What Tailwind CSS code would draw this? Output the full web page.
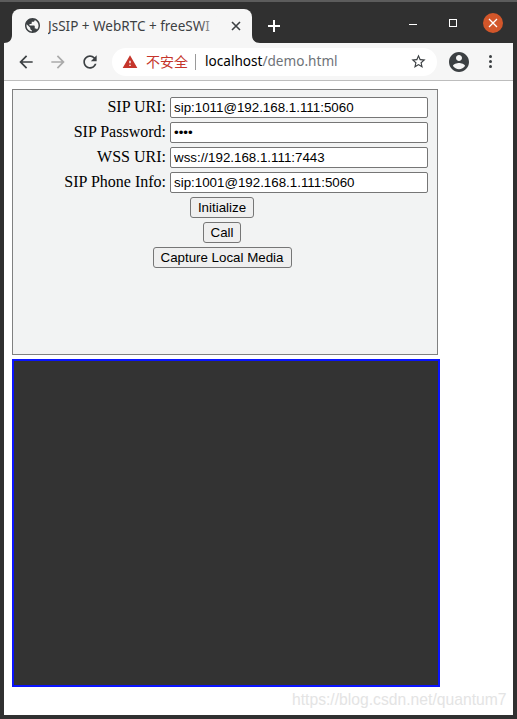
<!DOCTYPE html>
<html lang="en">
<head>
    <meta charset="UTF-8">
    <title>JsSIP + WebRTC + freeSWITCH</title>
    <script src="https://cdn.jsdelivr.net/npm/@tailwindcss/browser@4"></script>
</head>
<body class="bg-[#303030] overflow-hidden">
<div class="relative w-[517px] h-[719px] bg-[#303030] border-t-2 border-[#5c5c5c] flex flex-col font-['Noto_Sans',sans-serif]">

    <!-- title bar -->
    <div class="h-[41px] flex items-end pl-[12px] shrink-0">
        <div class="relative w-[240px] h-[34px] bg-[#f6f6f6] rounded-t-[8px] flex items-center pl-[13px] pb-[1px]">
            <svg class="absolute -left-[8px] bottom-0 w-[8px] h-[8px]" viewBox="0 0 8 8"><path d="M8 0v8H0c5 0 8-3 8-8z" fill="#f6f6f6"/></svg>
            <svg class="absolute -right-[8px] bottom-0 w-[8px] h-[8px]" viewBox="0 0 8 8"><path d="M0 0v8h8C3 8 0 5 0 0z" fill="#f6f6f6"/></svg>
            <svg class="w-[15px] h-[15px] shrink-0" viewBox="2 2 20 20"><path fill="#3c4043" d="M12 2C6.48 2 2 6.48 2 12s4.48 10 10 10 10-4.48 10-10S17.52 2 12 2zm-1 17.93c-3.95-.49-7-3.85-7-7.93 0-.62.08-1.21.21-1.79L9 15v1c0 1.1.9 2 2 2v1.93zm6.9-2.54c-.26-.81-1-1.39-1.9-1.39h-1v-3c0-.55-.45-1-1-1H8v-2h2c.55 0 1-.45 1-1V7h2c1.1 0 2-.9 2-2v-.41c2.93 1.19 5 4.06 5 7.41 0 2.08-.8 3.97-2.1 5.39z"/></svg>
            <div class="relative ml-[8px] w-[174px] h-[20px] overflow-hidden whitespace-nowrap text-[13.5px] leading-[20px] text-[#3c4043]">JsSIP + WebRTC + freeSWI
                <div class="absolute right-0 top-0 bottom-0 w-[24px] bg-gradient-to-r from-[#f6f6f6]/0 to-[#f6f6f6]"></div>
            </div>
            <svg class="w-[10px] h-[10px] ml-[9px] shrink-0" viewBox="0 0 10 10"><path d="M1 1l8 8M9 1l-8 8" stroke="#3c4043" stroke-width="1.6"/></svg>
        </div>
        <svg class="w-[14px] h-[14px] ml-[15px] mb-[10px] shrink-0" viewBox="0 0 14 14"><path d="M7 1v12M1 7h12" stroke="#fff" stroke-width="2"/></svg>
        <svg class="w-[10px] h-[10px] ml-[127px] mb-[17px] shrink-0" viewBox="0 0 10 10"><path d="M1 8.5h8" stroke="#fff" stroke-width="1"/></svg>
        <div class="w-[8px] h-[8px] ml-[31px] mb-[16px] border border-white shrink-0"></div>
        <div class="w-[20px] h-[20px] ml-[26px] mb-[10px] rounded-full bg-[#d2562a] flex items-center justify-center shrink-0">
            <svg class="w-[10px] h-[10px]" viewBox="0 0 10 10"><path d="M1 1l8 8M9 1l-8 8" stroke="#fff" stroke-width="1.3"/></svg>
        </div>
    </div>

    <!-- window body -->
    <div class="flex-1 ml-[4px] mr-[4px] mb-[4px] bg-white flex flex-col min-h-0">
        <!-- toolbar -->
        <div class="h-[38px] bg-[#f6f6f6] border-b border-[#bdbdbd] flex items-center shrink-0">
            <svg class="w-[20px] h-[20px] ml-[12px] shrink-0" viewBox="0 0 24 24"><path fill="#3c4043" d="M20 11H7.83l5.59-5.59L12 4l-8 8 8 8 1.41-1.41L7.83 13H20v-2z"/></svg>
            <svg class="w-[20px] h-[20px] ml-[12px] shrink-0" viewBox="0 0 24 24"><path fill="#aaaaaa" d="M4 11h12.17l-5.59-5.59L12 4l8 8-8 8-1.41-1.41L16.17 13H4v-2z"/></svg>
            <svg class="w-[20px] h-[20px] ml-[12px] shrink-0" viewBox="0 0 24 24"><path fill="#3c4043" d="M17.65 6.35C16.2 4.9 14.21 4 12 4c-4.42 0-7.99 3.58-7.99 8s3.57 8 7.99 8c3.73 0 6.84-2.55 7.73-6h-2.08c-.82 2.33-3.04 4-5.65 4-3.31 0-6-2.69-6-6s2.69-6 6-6c1.66 0 3.14.69 4.22 1.78L13 11h7V4l-2.35 2.35z"/></svg>
            <div class="w-[325px] h-[28px] ml-[12px] bg-white rounded-full flex items-center pl-[10px] shrink-0">
                <svg class="w-[16px] h-[16px] shrink-0" viewBox="0 0 24 24"><path fill="#c5352b" d="M1 21h22L12 2 1 21zm12-3h-2v-2h2v2zm0-4h-2v-4h2v4z"/></svg>
                <span class="ml-[8px] w-[42px] text-[14px] text-[#c5352b] whitespace-nowrap font-['Noto_Sans_CJK_SC',sans-serif]">不安全</span>
                <span class="ml-[7px] w-px h-[16px] bg-[#9a9a9a]"></span>
                <span class="ml-[9px] text-[13.6px] whitespace-nowrap text-black">localhost<span class="text-[#6e7378]">/demo.html</span></span>
                <svg class="w-[17px] h-[17px] ml-auto mr-[10px] shrink-0" viewBox="0 0 24 24"><path fill="#3c4043" d="M22 9.24l-7.19-.62L12 2 9.19 8.63 2 9.24l5.46 4.73L5.82 21 12 17.27 18.18 21l-1.63-7.03L22 9.24zM12 15.4l-3.76 2.27 1-4.28-3.32-2.88 4.38-.38L12 6.1l1.71 4.04 4.38.38-3.32 2.88 1 4.28L12 15.4z"/></svg>
            </div>
            <svg class="w-[24px] h-[24px] ml-[10px] shrink-0" viewBox="0 0 24 24"><path fill="#3c4043" d="M12 2C6.48 2 2 6.48 2 12s4.48 10 10 10 10-4.48 10-10S17.52 2 12 2zm0 3c1.66 0 3 1.34 3 3s-1.34 3-3 3-3-1.34-3-3 1.34-3 3-3zm0 14.2c-2.5 0-4.71-1.28-6-3.22.03-1.99 4-3.08 6-3.08 1.99 0 5.97 1.09 6 3.08-1.29 1.94-3.5 3.22-6 3.22z"/></svg>
            <div class="ml-[18px] flex flex-col gap-[2px] shrink-0">
                <span class="w-[3px] h-[3px] rounded-full bg-[#3c4043]"></span>
                <span class="w-[3px] h-[3px] rounded-full bg-[#3c4043]"></span>
                <span class="w-[3px] h-[3px] rounded-full bg-[#3c4043]"></span>
            </div>
        </div>

        <!-- page -->
        <div class="pt-[8px] pl-[8px]">
            <div class="w-[426px] h-[266px] bg-[#f2f3f3] border border-[#808080] pt-[7px]">
                <div class="w-[418px] flex flex-col">
                    <div class="h-[25px] grid grid-cols-[153px_258px] gap-x-[4px] items-start">
                        <label class="text-right text-[16px] leading-[19px] text-black font-['Liberation_Serif',serif]">SIP URI:</label>
                        <input class="h-[21px] border border-[#767676] rounded-[2px] bg-white px-[3px] text-[13.33px] text-black font-['Liberation_Sans',sans-serif]" value="sip:1011@192.168.1.111:5060">
                    </div>
                    <div class="h-[25px] grid grid-cols-[153px_258px] gap-x-[4px] items-start">
                        <label class="text-right text-[16px] leading-[19px] text-black font-['Liberation_Serif',serif]">SIP Password:</label>
                        <input type="password" class="h-[21px] border border-[#767676] rounded-[2px] bg-white px-[3px] text-[13.33px] text-black font-['Liberation_Sans',sans-serif]" value="1011">
                    </div>
                    <div class="h-[25px] grid grid-cols-[153px_258px] gap-x-[4px] items-start">
                        <label class="text-right text-[16px] leading-[19px] text-black font-['Liberation_Serif',serif]">WSS URI:</label>
                        <input class="h-[21px] border border-[#767676] rounded-[2px] bg-white px-[3px] text-[13.33px] text-black font-['Liberation_Sans',sans-serif]" value="wss://192.168.1.111:7443">
                    </div>
                    <div class="h-[25px] grid grid-cols-[153px_258px] gap-x-[4px] items-start">
                        <label class="text-right text-[16px] leading-[19px] text-black font-['Liberation_Serif',serif]">SIP Phone Info:</label>
                        <input class="h-[21px] border border-[#767676] rounded-[2px] bg-white px-[3px] text-[13.33px] text-black font-['Liberation_Sans',sans-serif]" value="sip:1001@192.168.1.111:5060">
                    </div>
                    <div class="flex flex-col items-center gap-[4px] font-['Liberation_Sans',sans-serif] text-[13.33px] text-black">
                        <button class="h-[21px] px-[7px] bg-[#efefef] border border-[#767676] rounded-[3px]">Initialize</button>
                        <button class="h-[21px] px-[7px] bg-[#efefef] border border-[#767676] rounded-[3px]">Call</button>
                        <button class="h-[21px] px-[7px] bg-[#efefef] border border-[#767676] rounded-[3px]">Capture Local Media</button>
                    </div>
                </div>
            </div>
            <div class="w-[428px] h-[328px] mt-[4px] bg-[#333333] border-2 border-[#0a14ff]"></div>
        </div>
    </div>

    <!-- watermark over the page -->
    <span class="absolute left-[292px] top-[686px] text-[15.7px] leading-[24px] text-[#e4e4e4] whitespace-nowrap font-['Liberation_Sans',sans-serif]">https://blog.csdn.net/quantum7</span>
</div>
</body>
</html>
